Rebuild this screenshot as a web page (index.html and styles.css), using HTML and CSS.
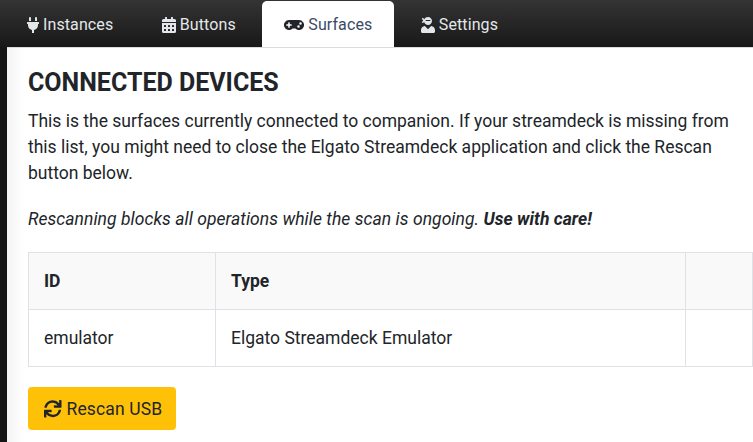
FILE: index.html
```html
<!DOCTYPE html>
<html lang="en">
<head>
<meta charset="utf-8">
<title>Surfaces</title>
<link rel="stylesheet" href="styles.css">
</head>
<body>
<nav class="tabs">
  <a class="tab"><svg class="icon plug" viewBox="0 0 384 512"><path fill="currentColor" d="M320 32a32 32 0 0 0-64 0v96h64V32zm48 128H16a16 16 0 0 0-16 16v32a16 16 0 0 0 16 16h16v32a160 160 0 0 0 128 156.800V512h64v-99.200A160 160 0 0 0 352 256v-32h16a16 16 0 0 0 16-16v-32a16 16 0 0 0-16-16zM128 32a32 32 0 0 0-64 0v96h64V32z"/></svg>Instances</a>
  <a class="tab"><svg class="icon cal" viewBox="0 0 448 512"><path fill="currentColor" d="M0 464a48 48 0 0 0 48 48h352a48 48 0 0 0 48-48V192H0v272zm320-196a12 12 0 0 1 12-12h40a12 12 0 0 1 12 12v40a12 12 0 0 1-12 12h-40a12 12 0 0 1-12-12v-40zm0 128a12 12 0 0 1 12-12h40a12 12 0 0 1 12 12v40a12 12 0 0 1-12 12h-40a12 12 0 0 1-12-12v-40zM192 268a12 12 0 0 1 12-12h40a12 12 0 0 1 12 12v40a12 12 0 0 1-12 12h-40a12 12 0 0 1-12-12v-40zm0 128a12 12 0 0 1 12-12h40a12 12 0 0 1 12 12v40a12 12 0 0 1-12 12h-40a12 12 0 0 1-12-12v-40zM64 268a12 12 0 0 1 12-12h40a12 12 0 0 1 12 12v40a12 12 0 0 1-12 12H76a12 12 0 0 1-12-12v-40zm0 128a12 12 0 0 1 12-12h40a12 12 0 0 1 12 12v40a12 12 0 0 1-12 12H76a12 12 0 0 1-12-12v-40zM400 64h-48V16a16 16 0 0 0-16-16h-32a16 16 0 0 0-16 16v48H160V16a16 16 0 0 0-16-16h-32a16 16 0 0 0-16 16v48H48A48 48 0 0 0 0 112v48h448v-48a48 48 0 0 0-48-48z"/></svg>Buttons</a>
  <a class="tab active"><svg class="icon pad" viewBox="0 0 640 512"><path fill="currentColor" fill-rule="evenodd" d="M480 96H160a160 160 0 1 0 114.240 272h91.520A160 160 0 1 0 480 96zM248 268a12 12 0 0 1-12 12h-52v52a12 12 0 0 1-12 12h-24a12 12 0 0 1-12-12v-52H84a12 12 0 0 1-12-12v-24a12 12 0 0 1 12-12h52v-52a12 12 0 0 1 12-12h24a12 12 0 0 1 12 12v52h52a12 12 0 0 1 12 12zm216 76a40 40 0 1 1 40-40 40 40 0 0 1-40 40zm64-96a40 40 0 1 1 40-40 40 40 0 0 1-40 40z"/></svg>Surfaces</a>
  <a class="tab"><svg class="icon ninja" viewBox="0 0 448 512"><path fill="currentColor" fill-rule="evenodd" d="M325.400 289.200L224 390.600 122.600 289.200C54 295.300 0 352.200 0 422.400V464c0 26.500 21.500 48 48 48h352c26.500 0 48-21.500 48-48v-41.600c0-70.200-54-127.100-122.600-133.200zM32 192c27.300 0 51.800-11.500 69.200-29.700 15.100 53.900 64 93.700 122.800 93.700 70.700 0 128-57.300 128-128S294.700 0 224 0c-50.400 0-93.600 29.400-114.500 71.800C92.100 47.800 64 32 32 32c0 33.400 17.100 62.800 43.100 80-26 17.200-43.100 46.600-43.100 80zm144-96h96c17.700 0 32 14.300 32 32H144c0-17.700 14.300-32 32-32z"/></svg>Settings</a>
</nav>
<main class="panel">
  <h2 class="title">CONNECTED DEVICES</h2>
  <p class="para">This is the surfaces currently connected to companion. If your streamdeck is missing from this list, you might need to close the Elgato Streamdeck application and click the Rescan button below.</p>
  <p class="para note"><em>Rescanning blocks all operations while the scan is ongoing. <strong>Use with care!</strong></em></p>
  <table class="devices">
    <thead>
      <tr><th class="col-id">ID</th><th class="col-type">Type</th><th></th></tr>
    </thead>
    <tbody>
      <tr><td>emulator</td><td>Elgato Streamdeck Emulator</td><td></td></tr>
    </tbody>
  </table>
  <button class="rescan"><svg class="icon sync" viewBox="0 0 512 512"><path fill="currentColor" d="M440.650 12.570l4 82.770A247.160 247.160 0 0 0 255.830 8C134.730 8 33.910 94.920 12.290 209.820A12 12 0 0 0 24.090 224h49.050a12 12 0 0 0 11.670-9.260 175.910 175.910 0 0 1 317-56.940l-101.460-4.860a12 12 0 0 0-12.570 12v47.410a12 12 0 0 0 12 12H500a12 12 0 0 0 12-12V12a12 12 0 0 0-12-12h-47.370a12 12 0 0 0-11.980 12.570zM255.830 432a175.610 175.610 0 0 1-146-77.800l101.800 4.870a12 12 0 0 0 12.570-12v-47.400a12 12 0 0 0-12-12H12a12 12 0 0 0-12 12V500a12 12 0 0 0 12 12h47.350a12 12 0 0 0 12-12.600l-4.150-82.570A247.170 247.170 0 0 0 255.830 504c121.110 0 221.930-86.920 243.550-201.820a12 12 0 0 0-11.800-14.180h-49.050a12 12 0 0 0-11.670 9.260A175.860 175.860 0 0 1 255.830 432z"/></svg>Rescan USB</button>
</main>
</body>
</html>
```
FILE: styles.css
```css
html, body {
  margin: 0;
  padding: 0;
  height: 100%;
  overflow: hidden;
}
body {
  display: flex;
  flex-direction: column;
  background: #151515;
  font-family: Roboto, "Liberation Sans", sans-serif;
  font-size: 17.5px;
  line-height: 1.5;
  color: #212529;
}
.tabs {
  display: flex;
  gap: 4.5px;
  height: 47px;
  flex: none;
  padding-left: 5px;
  box-sizing: border-box;
  background: linear-gradient(#343434, #181818);
}
.tab {
  display: flex;
  align-items: center;
  height: 46px;
  margin-top: 1px;
  padding: 1px 22px 0;
  box-sizing: border-box;
  font-size: 16px;
  letter-spacing: 0.1px;
  color: #e4e7ea;
  border-radius: 5px 5px 0 0;
}
.tab.active {
  background: #fff;
  color: #3c4b64;
}
.icon {
  height: 16px;
  margin-right: 4px;
  flex: none;
}
.active .pad {
  color: #212529;
}
.panel {
  flex: 1;
  margin-left: 7px;
  padding: 20px 21px 0;
  background: linear-gradient(90deg, #f3f3f3, #fff 17px);
  border-top: 1px solid #d8dbe0;
}
.title {
  margin: 0 0 10px;
  font-size: 25px;
  font-weight: 700;
  line-height: 1.2;
}
.para {
  margin: 0 0 20px;
  line-height: 26px;
}
.note {
  letter-spacing: 0.05px;
}
.devices {
  width: 725px;
  border-collapse: collapse;
  margin-bottom: 20px;
}
.devices th, .devices td {
  border: 1px solid #dee2e6;
  padding: 15px;
  text-align: left;
  line-height: 26px;
}
.devices thead tr {
  background: #f9f9f9;
}
.col-id { width: 156px; }
.col-type { width: 439px; }
.rescan {
  display: flex;
  align-items: center;
  height: 43px;
  padding: 1px 14px 0 16px;
  border: 0;
  border-radius: 4px;
  background: #ffc107;
  color: #212529;
  font: inherit;
  letter-spacing: 0.15px;
}
.sync {
  height: 17.5px;
  margin-right: 5px;
}
```
